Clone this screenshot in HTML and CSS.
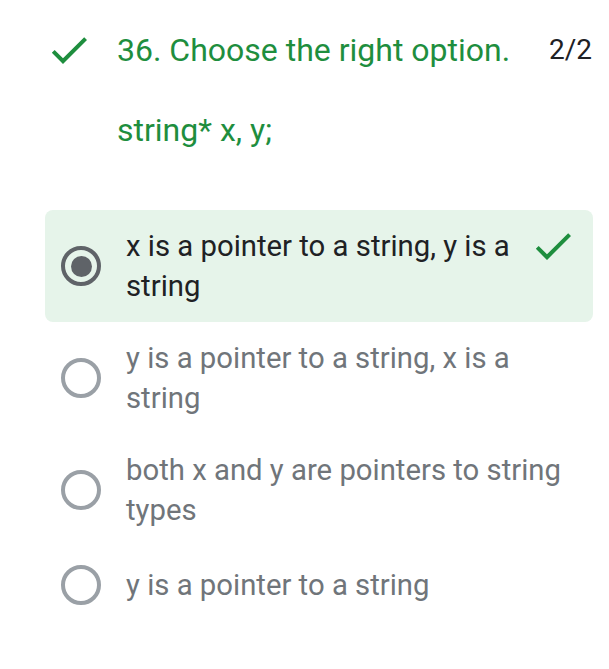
FILE: index.html
```html
<!DOCTYPE html>
<html lang="en">

<head>
    <meta charset="UTF-8">
    <meta name="viewport" content="width=device-width, initial-scale=1.0">
    <title>Quiz result</title>
    <link rel="stylesheet" href="styles.css">
</head>

<body>
    <div class="question">
        <div class="question-header">
            <svg class="check-icon" viewBox="0 0 24 24"><path d="M9 16.17L4.83 12l-1.42 1.41L9 19 21 7l-1.41-1.41z"/></svg>
            <h2 class="question-title">36. Choose the right option.</h2>
            <span class="score">2/2</span>
        </div>
        <p class="question-code">string* x, y;</p>

        <div class="options">
            <div class="option correct">
                <span class="radio checked"></span>
                <span class="option-text">x is a pointer to a string, y is a string</span>
                <svg class="check-icon" viewBox="0 0 24 24"><path d="M9 16.17L4.83 12l-1.42 1.41L9 19 21 7l-1.41-1.41z"/></svg>
            </div>
            <div class="option">
                <span class="radio"></span>
                <span class="option-text">y is a pointer to a string, x is a string</span>
            </div>
            <div class="option">
                <span class="radio"></span>
                <span class="option-text">both x and y are pointers to string types</span>
            </div>
            <div class="option">
                <span class="radio"></span>
                <span class="option-text">y is a pointer to a string</span>
            </div>
        </div>
    </div>
</body>

</html>
```

FILE: styles.css
```css
* {
    margin: 0;
    padding: 0;
    box-sizing: border-box
}

:root {
    --green: #1e8e3e;
    --correct-bg: #e6f4ea;
    --text-dark: #202124;
    --text-grey: #70757a;
    --radio-grey: #9aa0a6;
    --radio-dark: #5f6368
}

body {
    background: #fff;
    color: var(--text-dark);
    font-family: Roboto, "Liberation Sans", sans-serif
}

.question {
    padding: 26px 16px 0 45px
}

.question-header {
    display: flex;
    align-items: center;
    height: 48px
}

.check-icon {
    width: 48px;
    height: 48px;
    flex-shrink: 0;
    fill: var(--green)
}

.question-title {
    flex: 1;
    margin-left: 24px;
    font-size: 32px;
    font-weight: 400;
    line-height: 48px;
    color: var(--green)
}

.score {
    font-size: 28px;
    line-height: 48px;
    margin-right: 1px;
    color: var(--text-dark)
}

.question-code {
    margin: 36px 0 0 72px;
    font-size: 32px;
    line-height: 40px;
    color: var(--green)
}

.options {
    margin-top: 60px
}

.option {
    display: flex;
    align-items: center;
    min-height: 78px;
    padding: 16px;
    border-radius: 8px
}

.option.correct {
    background: var(--correct-bg)
}

.radio {
    width: 40px;
    height: 40px;
    flex-shrink: 0;
    border: 4px solid var(--radio-grey);
    border-radius: 50%;
    display: flex;
    align-items: center;
    justify-content: center
}

.radio.checked {
    border-color: var(--radio-dark)
}

.radio.checked::after {
    content: "";
    width: 21px;
    height: 21px;
    border-radius: 50%;
    background: var(--radio-dark)
}

.option-text {
    flex: 1;
    margin-left: 25px;
    font-size: 29.3px;
    line-height: 40px;
    color: var(--text-grey)
}

.option.correct .option-text {
    color: var(--text-dark)
}

.option.correct .check-icon {
    align-self: flex-start;
    margin-top: -4px;
    margin-left: 8px
}
```
